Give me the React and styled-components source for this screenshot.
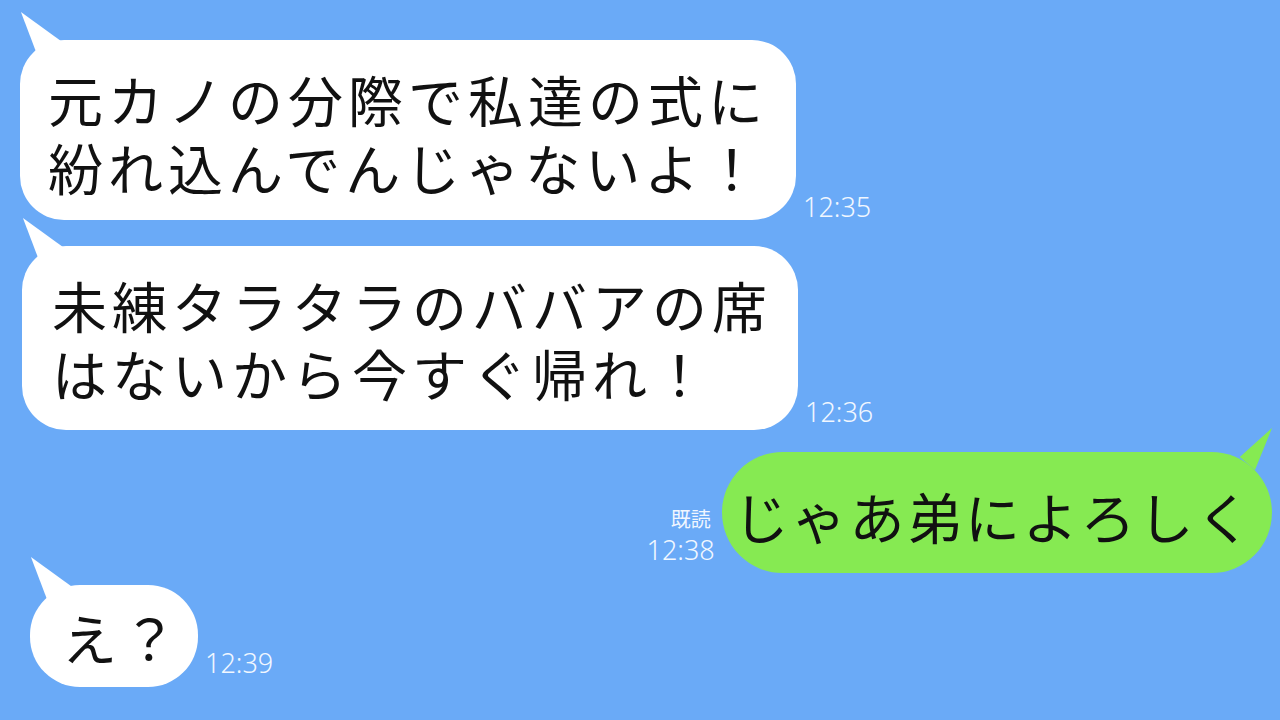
import React from 'react';
import styled, { createGlobalStyle } from 'styled-components';

const Global = createGlobalStyle`
  html, body {
    margin: 0;
    padding: 0;
    background: #6aaaf7;
  }
  body {
    font-family: "Noto Sans CJK JP", "Noto Sans", sans-serif;
  }
`;

const Screen = styled.div`
  width: 1280px;
  height: 720px;
  overflow: hidden;
  background: #6aaaf7;
  display: flex;
  flex-direction: column;
  padding-top: 40px;
  box-sizing: border-box;
`;

const Row = styled.div`
  display: flex;
  align-items: flex-end;
  justify-content: ${p => (p.$mine ? 'flex-end' : 'flex-start')};
  gap: 7px;
  margin-top: ${p => p.$gap || 0}px;
  padding-left: ${p => p.$left || 20}px;
  padding-right: 8px;
`;

const Bubble = styled.div`
  position: relative;
  background: ${p => (p.$mine ? '#86ea52' : '#ffffff')};
  color: #111;
  font-family: "Noto Sans CJK JP", sans-serif;
  font-size: 55px;
  line-height: 68px;
  letter-spacing: ${p => p.$ls ?? 5}px;
  white-space: nowrap;
  padding: ${p => p.$pad};
  border-radius: ${p => p.$radius || 44}px;

  &::before {
    content: '';
    position: absolute;
    top: -30px;
    width: 46px;
    height: 50px;
    background: inherit;
    ${p =>
      p.$mine
        ? `right: 0; clip-path: polygon(100% 12%, 30% 70%, 63% 96%);`
        : `left: 0; clip-path: polygon(2% 4%, 40% 96%, 92% 64%);`}
  }
`;

const Line = styled.div``;

const Meta = styled.div`
  display: flex;
  flex-direction: column;
  align-items: flex-end;
  margin-bottom: ${p => p.$drop || 0}px;
  color: #f1f7ff;
`;

const Read = styled.span`
  font-family: "Noto Sans CJK JP", sans-serif;
  font-size: 20px;
  line-height: 22px;
  margin-bottom: 6px;
  margin-right: 4px;
`;

const Time = styled.span`
  font-family: "Noto Sans", sans-serif;
  font-weight: 300;
  font-size: 27px;
  line-height: 27px;
`;

export default function App() {
  return (
    <Screen>
      <Global />
      <Row>
        <Bubble $pad="24px 28px 20px 28px">
          <Line>元カノの分際で私達の式に</Line>
          <Line>紛れ込んでんじゃないよ！</Line>
        </Bubble>
        <Meta $drop={0}>
          <Time>12:35</Time>
        </Meta>
      </Row>
      <Row $gap={26} $left={22}>
        <Bubble $pad="24px 26px 24px 30px">
          <Line>未練タラタラのババアの席</Line>
          <Line>はないから今すぐ帰れ！</Line>
        </Bubble>
        <Meta $drop={5}>
          <Time>12:36</Time>
        </Meta>
      </Row>
      <Row $mine $gap={22}>
        <Meta $drop={10}>
          <Read>既読</Read>
          <Time>12:38</Time>
        </Meta>
        <Bubble $mine $ls={2.8} $radius={61} $pad="29px 18px 24px 12px">
          <Line>じゃあ弟によろしく</Line>
        </Bubble>
      </Row>
      <Row $gap={12} $left={30}>
        <Bubble $pad="17px 16px 17px 32px" $radius={50}>
          <Line>え？</Line>
        </Bubble>
        <Meta $drop={11}>
          <Time>12:39</Time>
        </Meta>
      </Row>
    </Screen>
  );
}
